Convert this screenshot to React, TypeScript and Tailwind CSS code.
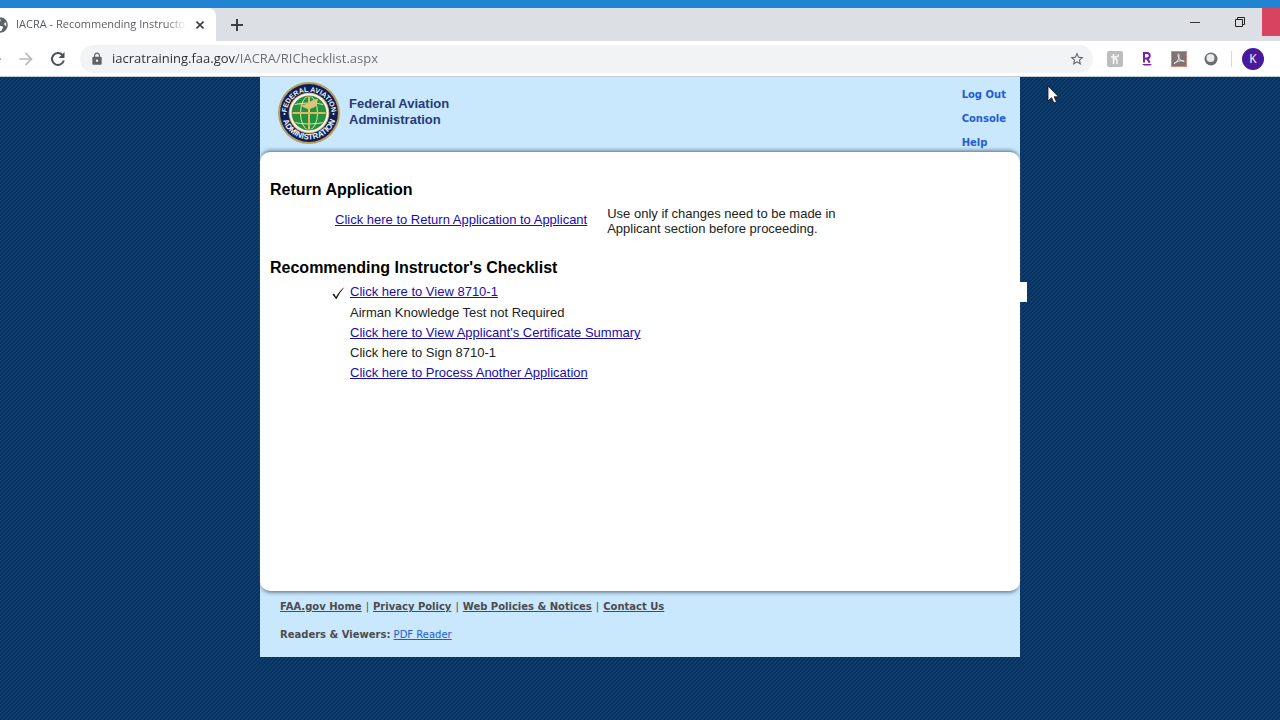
import React from 'react';
import { FaGlobeAmericas } from 'react-icons/fa';
import { MdArrowBack, MdArrowForward, MdLock, MdStarBorder } from 'react-icons/md';

const headerLinks = ['Log Out', 'Console', 'Help'];
const footerLinks = ['FAA.gov Home', 'Privacy Policy', 'Web Policies & Notices', 'Contact Us'];

const linkClass = 'text-[#1a0dab] underline';

const Seal: React.FC = () => (
    <svg viewBox="0 0 64 64" className="size-16 shrink-0" role="img" aria-label="Federal Aviation Administration seal">
        <defs>
            <path id="seal-top" d="M10 38 A22.500 22.500 0 1 1 54 38" />
            <path id="seal-bottom" d="M4.700 26 A27.700 27.700 0 1 0 59.300 26" />
            <clipPath id="seal-globe"><circle cx="32" cy="32" r="17" /></clipPath>
        </defs>
        <circle cx="32" cy="32" r="31" fill="#b8a061" />
        <circle cx="32" cy="32" r="29" fill="#0c1f58" />
        <circle cx="32" cy="32" r="20.400" fill="#c4ae67" />
        <circle cx="32" cy="32" r="19.400" fill="#f6f5e6" />
        <circle cx="32" cy="32" r="17" fill="#25913a" />
        <g clipPath="url(#seal-globe)" fill="none" stroke="#dfe3b0" strokeWidth="1">
            <ellipse cx="32" cy="32" rx="8.500" ry="17" />
            <path d="M15 24q17 -4 34 0M15 41q17 4 34 0" />
            <path d="M13 32h38M32 15v34" stroke="#d9bd66" strokeWidth="2" />
        </g>
        <path d="M22 23c4 1 6 1 9-1 3-2 6-4 10-4-1 3-1 5-2 7-2 2-5 2-6 3v3h-2v-3c-3-1-6-2-9-5z" fill="#dcc478" />
        <circle cx="32" cy="32" r="17" fill="none" stroke="#3b6d35" strokeWidth="0.7" />
        <g fill="#f4f4f4" fontFamily="Liberation Sans, Arial, sans-serif" fontWeight="bold" textAnchor="middle">
            <text fontSize="7"><textPath href="#seal-top" startOffset="50%">FEDERAL AVIATION</textPath></text>
            <text fontSize="8"><textPath href="#seal-bottom" startOffset="50%">ADMINISTRATION</textPath></text>
        </g>
        <circle cx="7.500" cy="33" r="1" fill="#f4f4f4" />
        <circle cx="56.500" cy="33" r="1" fill="#f4f4f4" />
    </svg>
);

const TabStrip: React.FC = () => (
    <div className="flex h-[33px] bg-[#dcdfe4] overflow-hidden">
        <div className="flex items-center w-[216px] shrink-0 bg-white rounded-tr-lg">
            <FaGlobeAmericas className="size-4 -ml-2 shrink-0 text-[#5f6368]" />
            <span className="ml-2 w-[172px] whitespace-nowrap text-[11px] text-[#5a5d61] [mask-image:linear-gradient(to_right,black_150px,transparent_170px)]">
                IACRA - Recommending Instructo
            </span>
            <button aria-label="Close tab" className="ml-2 text-[#3c4043]">
                <svg viewBox="0 0 8 8" className="size-2" stroke="currentColor" strokeWidth="1.600"><path d="M.5.5l7 7M7.500.5l-7 7" /></svg>
            </button>
        </div>
        <button aria-label="New tab" className="ml-[15px] text-[#3c4043]">
            <svg viewBox="0 0 12 12" className="size-3" stroke="currentColor" strokeWidth="2"><path d="M6 0v12M0 6h12" /></svg>
        </button>
        <div className="ml-auto flex items-start">
            <button aria-label="Minimize" className="flex h-7 w-[45px] items-center justify-center">
                <svg viewBox="0 0 10 10" className="size-2.5"><path d="M0 5.500h10" stroke="#333" /></svg>
            </button>
            <button aria-label="Restore" className="flex h-7 w-[45px] items-center justify-center">
                <svg viewBox="0 0 10 10" className="size-2.5" fill="none" stroke="#222">
                    <path d="M.5 2.500h7v7h-7zM2.500 2.500v-2h7v7h-2" />
                </svg>
            </button>
            <button aria-label="Close" className="-mr-[27px] flex h-7 w-[45px] items-center justify-center bg-[#d84460] text-white">
                <svg viewBox="0 0 10 10" className="size-2.5"><path d="M0 0l10 10M10 0L0 10" stroke="currentColor" /></svg>
            </button>
        </div>
    </div>
);

const Toolbar: React.FC = () => (
    <div className="flex h-9 items-center overflow-hidden bg-white border-b border-[#c5cbd6] text-[#5f6368]">
        <button aria-label="Back" className="-ml-4 shrink-0"><MdArrowBack className="size-5" /></button>
        <button aria-label="Forward" className="ml-3 shrink-0 text-[#b9bbbe]"><MdArrowForward className="size-5" /></button>
        <button aria-label="Reload" className="ml-3 shrink-0 text-[#4d5156]">
            <svg viewBox="0 0 20 20" className="size-5">
                <path d="M14.500 6A6 6 0 1 0 15.800 11.500" fill="none" stroke="currentColor" strokeWidth="2" />
                <path d="M16.500 3v6h-6z" fill="currentColor" />
            </svg>
        </button>
        <div className="ml-3 flex h-7 min-w-0 flex-1 items-center rounded-full bg-[#f1f3f4] pl-2.5 pr-2">
            <MdLock className="size-3.5 shrink-0" />
            <input
                aria-label="Address"
                defaultValue="iacratraining.faa.gov/IACRA/RIChecklist.aspx"
                className="ml-2 min-w-0 flex-1 bg-[linear-gradient(to_right,#2b2d31_124px,#686c71_124px)] bg-clip-text text-[13px] text-transparent outline-none"
            />
            <button aria-label="Bookmark this page"><MdStarBorder className="size-4" /></button>
        </div>
        <div className="ml-3.5 mr-4 flex shrink-0 items-center gap-4">
            <button aria-label="Honey">
                <svg viewBox="0 0 16 16" className="size-4">
                    <rect width="16" height="16" rx="2" fill="#bdbdbd" />
                    <path d="M6.500 3v10M6.500 9q3.500-3 3.500 1v3M4 6h5q2.500 0 2-2.500" stroke="#f7f7f7" strokeWidth="1.500" fill="none" />
                </svg>
            </button>
            <button aria-label="Rakuten">
                <svg viewBox="0 0 16 16" className="size-4">
                    <path d="M5 11.600V2h3a2.700 2.700 0 0 1 0 5.400H5M7.800 7.400l3 4.200" fill="none" stroke="#7a1fa8" strokeWidth="2" />
                    <path d="M3 13h10l-2 1.500H5z" fill="#7a1fa8" />
                </svg>
            </button>
            <button aria-label="Adobe Acrobat">
                <svg viewBox="0 0 16 16" className="size-4">
                    <rect x=".5" y=".5" width="15" height="15" fill="#7d7475" stroke="#d98681" />
                    <path d="M3 12.500c4-2 5.500-5 5-9-.8-1-1.500 0-.8 2 1 3 3 4.500 5.500 5 1 0 .5-1-1-1-3 0-5.700 1-8.700 3z" fill="none" stroke="#eee" />
                </svg>
            </button>
            <button aria-label="Recorder">
                <svg viewBox="0 0 16 16" className="size-4">
                    <circle cx="8" cy="8" r="6.500" fill="#6b6e70" />
                    <circle cx="7.500" cy="7" r="4" fill="#e8eaeb" />
                </svg>
            </button>
            <span className="-ml-1 h-4 w-px bg-[#d5d8dc]" />
            <button aria-label="Profile" className="-ml-1.5 flex size-[22px] items-center justify-center rounded-full bg-[#4a1a9e] text-xs text-white">K</button>
        </div>
    </div>
);

const App: React.FC = () => {
    return (
        <div className="flex min-h-screen flex-col font-['Liberation_Sans',Arial,sans-serif] bg-[#073463]">

            {/* Browser */}
            <div className="border-t-8 border-[#2084d3] font-['Open_Sans','Noto_Sans',sans-serif]">
                <TabStrip />
                <Toolbar />
            </div>

            <div className="relative flex-1 overflow-hidden bg-[linear-gradient(135deg,#124172_12%,#063260_13%,#063260_49%,#124172_50%,#124172_62%,#063260_63%)] bg-[length:4px_4px]">
                <div className="relative mx-auto max-w-[760px] bg-[#c9e7fd]">

                    {/* Header */}
                    <header className="flex h-[75px] justify-between pl-[17px] pr-3.5">
                        <div className="flex items-start gap-2 pt-1">
                            <Seal />
                            <p className="pt-[15px] text-[13px]/4 font-bold text-[#263b78]">
                                Federal Aviation<br />Administration
                            </p>
                        </div>
                        <nav className="flex flex-col pt-1.5 font-['DejaVu_Sans',sans-serif] text-[10px]/6 font-bold text-[#1f5bd8]">
                            {headerLinks.map((label) => <a key={label} href="#">{label}</a>)}
                        </nav>
                    </header>

                    {/* Content */}
                    <main className="relative h-[439px] rounded-[10px] bg-white px-2.5 pt-7 text-[13px]/5 text-[#222] shadow-[0_-3px_4px_-2px_#4d6275,0_3px_4px_-2px_#4d6275]">
                        <span className="absolute left-full top-[130px] h-5 w-[7px] bg-white" />
                        <h2 className="text-base/5 font-bold text-black">Return Application</h2>
                        <div className="flex items-start gap-5 pl-[65px] pt-1.5">
                            <a href="#" className="text-[13px]/7 text-[#1a0dab] underline">Click here to Return Application to Applicant</a>
                            <p className="w-60 text-[13px]/[15px]">Use only if changes need to be made in Applicant section before proceeding.</p>
                        </div>
                        <h2 className="mt-5 text-base/6 font-bold text-black">Recommending Instructor's Checklist</h2>
                        <ul className="pl-20 pt-0.5">
                            <li className="relative pb-px">
                                <svg viewBox="0 0 14 14" className="absolute -left-[18px] top-1 size-3.5">
                                    <path d="M.5 8.500l1.500-1 2 3.500Q8 4 12.500 1 8 6 4.500 13H4z" fill="#111" />
                                </svg>
                                <a href="#" className={linkClass}>Click here to View 8710-1</a>
                            </li>
                            <li>Airman Knowledge Test not Required</li>
                            <li><a href="#" className={linkClass}>Click here to View Applicant's Certificate Summary</a></li>
                            <li>Click here to Sign 8710-1</li>
                            <li><a href="#" className={linkClass}>Click here to Process Another Application</a></li>
                        </ul>
                    </main>

                    {/* Footer */}
                    <footer className="px-5 pb-3.5 pt-2 font-['DejaVu_Sans',sans-serif] text-[10px]/4 text-[#4c4c4c]">
                        <div className="flex">
                            {footerLinks.map((label, i) => (
                                <React.Fragment key={label}>
                                    {i > 0 && <span className="px-1">|</span>}
                                    <a href="#" className="font-bold underline">{label}</a>
                                </React.Fragment>
                            ))}
                        </div>
                        <p className="mt-3">
                            <b>Readers &amp; Viewers:</b> <a href="#" className="text-[#1f5bd8] underline">PDF Reader</a>
                        </p>
                    </footer>
                </div>

                {/* Mouse pointer */}
                <svg viewBox="0 0 12 19" className="absolute right-[221px] top-2 h-[19px] w-3">
                    <path d="M1 1v15l3.500-3.300L7 18l2.500-1.100-2.400-5.100h4.400z" fill="#fff" stroke="#111" strokeWidth=".8" />
                </svg>
            </div>
        </div>
    );
};

export default App;
